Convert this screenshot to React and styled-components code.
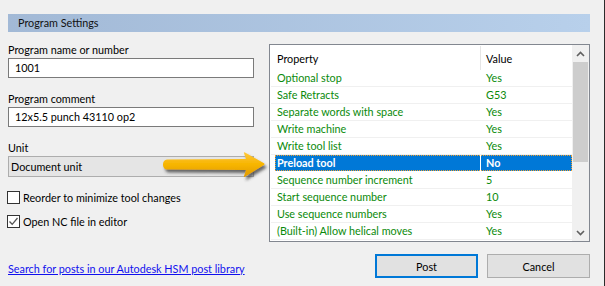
import React from "react";
import styled, { createGlobalStyle } from "styled-components";

const Global = createGlobalStyle`
  html, body { margin: 0; padding: 0; background: #f0f0f0; overflow: hidden; }
  body { font-family: Lato, "Liberation Sans", sans-serif; font-size: 10.8px; color: #000; }
  * { box-sizing: border-box; }
`;

const Frame = styled.div`
  position: relative;
  width: 605px;
  height: 286px;
  padding: 14px 14px 0 8px;
  border-right: 1px solid #2b2b2b;
  background: #f0f0f0;
`;

const TitleBar = styled.div`
  height: 18px;
  line-height: 18px;
  padding-left: 10px;
  background: linear-gradient(to right, #a2b9d6, #b8d0eb);
  color: #111;
`;

const Body = styled.div`
  margin-top: 10px;
  display: grid;
  grid-template-columns: 246px 1fr;
  column-gap: 15px;
`;

const LeftCol = styled.div`
  display: flex;
  flex-direction: column;
`;

const Field = styled.div`
  display: flex;
  flex-direction: column;
  margin-bottom: 13px;
`;

const Label = styled.div`
  line-height: 15px;
  margin-bottom: 1px;
`;

const TextBox = styled.div`
  height: 20px;
  border: 1px solid #7a7a7a;
  background: #fff;
  padding-left: 6px;
  line-height: 18px;
`;

const Select = styled.div`
  position: relative;
  height: 21px;
  border: 1px solid #adadad;
  background: #e5e5e5;
  padding-left: 2px;
  line-height: 19px;
`;

const SelectArrow = styled.svg`
  position: absolute;
  right: 6px;
  top: 7px;
`;

const CheckRow = styled.div`
  display: flex;
  align-items: center;
  gap: 3px;
  margin-left: -1px;
  line-height: 15px;
  margin-top: ${(p) => p.$top}px;
`;

const Box = styled.div`
  width: 13px;
  height: 13px;
  border: 1px solid #333;
  background: #fff;
  display: flex;
  align-items: center;
  justify-content: center;
`;

const Table = styled.div`
  margin-top: 2px;
  height: 198px;
  border: 1px solid #828790;
  background: #fff;
  display: flex;
`;

const List = styled.div`
  flex: 1;
  display: flex;
  flex-direction: column;
`;

const Header = styled.div`
  height: 25px;
  display: grid;
  grid-template-columns: 211px 1fr;
  align-items: stretch;
`;

const HeadCell = styled.div`
  display: flex;
  align-items: center;
  padding-left: ${(p) => p.$pad}px;
  border-right: ${(p) => (p.$divider ? "1px solid #e5e5e5" : "none")};
  margin: 1px 0 0;
  color: #000;
`;

const Row = styled.div`
  height: 17px;
  margin-left: 1px;
  padding-left: 4px;
  border-bottom: 1px solid ${(p) => (p.$selected ? "#fff" : "#f0f0f0")};
`;

const RowInner = styled.div`
  height: 16px;
  display: grid;
  grid-template-columns: 206px 1fr;
  background: ${(p) => (p.$selected ? "#0078d7" : "transparent")};
  outline: ${(p) => (p.$selected ? "1px dotted #f0a030" : "none")};
  outline-offset: -1px;
  color: ${(p) => (p.$selected ? "#fff" : "#0a8a0a")};
  font-weight: ${(p) => (p.$selected ? 700 : 400)};
  line-height: 16px;
`;

const PropCell = styled.div`
  padding-left: 2px;
  border-right: 1px solid #fff;
  white-space: nowrap;
  overflow: hidden;
`;

const ValueCell = styled.div`
  padding-left: 5px;
`;

const Scrollbar = styled.div`
  width: 17px;
  background: #f0f0f0;
  display: flex;
  flex-direction: column;
`;

const ScrollBtn = styled.div`
  height: 17px;
  display: flex;
  align-items: center;
  justify-content: center;
`;

const Thumb = styled.div`
  height: 100px;
  margin: 0 1px;
  background: #cdcdcd;
`;

const Spacer = styled.div`
  flex: 1;
`;

const Footer = styled.div`
  margin-top: 12px;
  display: flex;
  align-items: center;
`;

const Link = styled.a`
  flex: 1;
  padding-top: 4px;
  color: #1010ee;
  text-decoration: underline;
  line-height: 15px;
`;

const Buttons = styled.div`
  display: flex;
  gap: 9px;
`;

const Button = styled.div`
  width: 103px;
  height: 24px;
  display: flex;
  align-items: center;
  justify-content: center;
  background: #e1e1e1;
  border: ${(p) => (p.$default ? "2px solid #0078d7" : "1px solid #adadad")};
`;

const ArrowSvg = styled.svg`
  position: absolute;
  left: 155px;
  top: 148px;
  overflow: visible;
`;

const rows = [
  ["Optional stop", "Yes"],
  ["Safe Retracts", "G53"],
  ["Separate words with space", "Yes"],
  ["Write machine", "Yes"],
  ["Write tool list", "Yes"],
  ["Preload tool", "No", true],
  ["Sequence number increment", "5"],
  ["Start sequence number", "10"],
  ["Use sequence numbers", "Yes"],
  ["(Built-in) Allow helical moves", "Yes"],
];

const Chevron = ({ up }) => (
  <svg width="9" height="6" viewBox="0 0 9 6">
    <polyline
      points={up ? "1,5 4.5,1.5 8,5" : "1,1 4.5,4.5 8,1"}
      fill="none"
      stroke="#606060"
      strokeWidth="1.6"
    />
  </svg>
);

export default function App() {
  return (
    <>
      <Global />
      <Frame>
        <TitleBar>Program Settings</TitleBar>
        <Body>
          <LeftCol>
            <Field>
              <Label>Program name or number</Label>
              <TextBox>1001</TextBox>
            </Field>
            <Field>
              <Label>Program comment</Label>
              <TextBox>12x5.5 punch 43110 op2</TextBox>
            </Field>
            <Field>
              <Label>Unit</Label>
              <Select>
                Document unit
                <SelectArrow width="9" height="6" viewBox="0 0 9 6">
                  <polyline points="1,1 4.5,4.5 8,1" fill="none" stroke="#333" strokeWidth="1.2" />
                </SelectArrow>
              </Select>
            </Field>
            <CheckRow $top={0}>
              <Box />
              Reorder to minimize tool changes
            </CheckRow>
            <CheckRow $top={9}>
              <Box>
                <svg width="11" height="11" viewBox="0 0 11 11">
                  <polyline points="1.5,5.5 4.2,8.3 9.5,2" fill="none" stroke="#555" strokeWidth="1.3" />
                </svg>
              </Box>
              Open NC file in editor
            </CheckRow>
          </LeftCol>
          <Table>
            <List>
              <Header>
                <HeadCell $pad={7} $divider>Property</HeadCell>
                <HeadCell $pad={5}>Value</HeadCell>
              </Header>
              {rows.map(([name, value, sel]) => (
                <Row key={name} $selected={sel}>
                  <RowInner $selected={sel}>
                    <PropCell>{name}</PropCell>
                    <ValueCell>{value}</ValueCell>
                  </RowInner>
                </Row>
              ))}
            </List>
            <Scrollbar>
              <ScrollBtn>
                <Chevron up />
              </ScrollBtn>
              <Thumb />
              <Spacer />
              <ScrollBtn>
                <Chevron />
              </ScrollBtn>
            </Scrollbar>
          </Table>
        </Body>
        <Footer>
          <Link>Search for posts in our Autodesk HSM post library</Link>
          <Buttons>
            <Button $default>Post</Button>
            <Button>Cancel</Button>
          </Buttons>
        </Footer>
        <ArrowSvg width="115" height="34" viewBox="0 0 115 34">
          <defs>
            <linearGradient id="gold" x1="0" y1="0" x2="0" y2="1">
              <stop offset="0" stopColor="#ffc83a" />
              <stop offset="0.5" stopColor="#f7b500" />
              <stop offset="1" stopColor="#e09a00" />
            </linearGradient>
            <filter id="shadow" x="-20%" y="-50%" width="140%" height="200%">
              <feDropShadow dx="2" dy="3" stdDeviation="1.6" floodColor="#3a3a3a" floodOpacity="0.75" />
            </filter>
          </defs>
          <path
            d="M12,11.5 C9.5,11.5 8,13.8 8,16.5 C8,19.2 9.5,21.5 12,21.5 L91,22 L89,28 Q88.5,29.5 90,28.7 L109,17 Q110,16 109,15.2 L90,4.5 Q88.5,3.7 89,5.3 L91,11 Z"
            fill="url(#gold)"
            filter="url(#shadow)"
          />
        </ArrowSvg>
      </Frame>
    </>
  );
}
